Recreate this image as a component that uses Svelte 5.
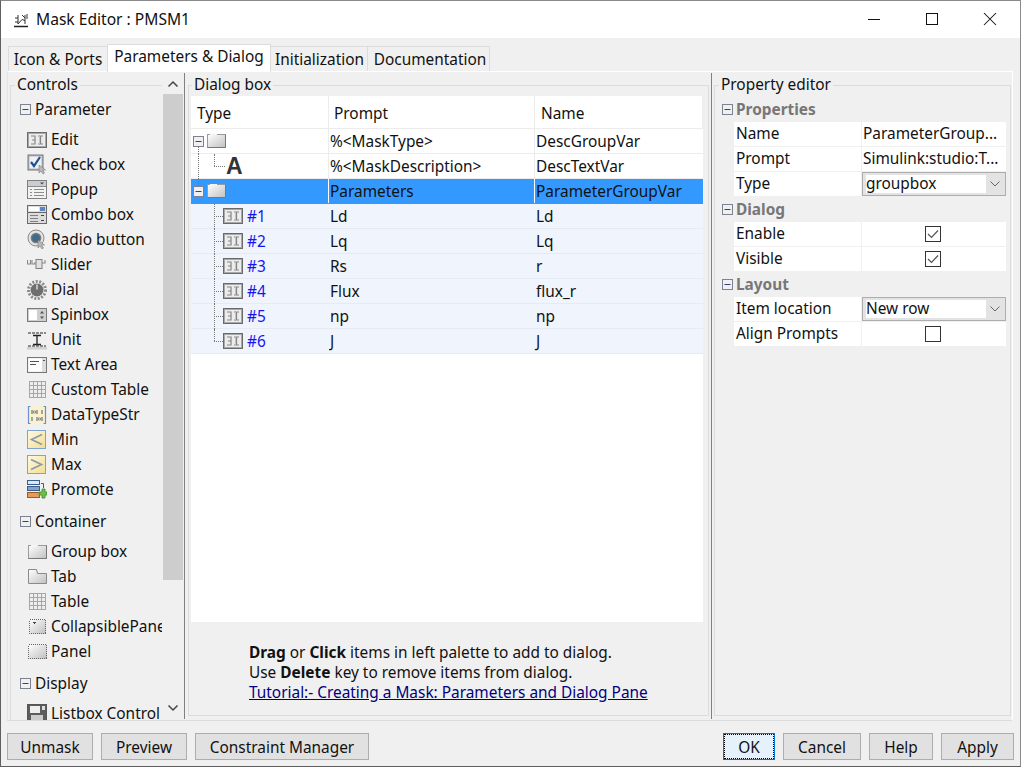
<script>
  const groups = [
    { title: 'Parameter', items: [
      ['edit','Edit'],['check','Check box'],['popup','Popup'],['combo','Combo box'],['radio','Radio button'],
      ['slider','Slider'],['dial','Dial'],['spin','Spinbox'],['unit','Unit'],['area','Text Area'],
      ['grid','Custom Table'],['dts','DataTypeStr'],['min','Min'],['max','Max'],['promote','Promote']] },
    { title: 'Container', items: [
      ['group','Group box'],['tab','Tab'],['grid','Table'],['coll','CollapsiblePanel'],['panel','Panel']] },
    { title: 'Display', items: [['list','Listbox Control']] }
  ];
  const params = [
    ['#1','Ld','Ld'],['#2','Lq','Lq'],['#3','Rs','r'],['#4','Flux','flux_r'],['#5','np','np'],['#6','J','J']
  ];
  const tabs = ['Icon & Ports','Parameters & Dialog','Initialization','Documentation'];
</script>

{#snippet minus()}
  <svg class="minus" width="11" height="11" viewBox="0 0 11 11"><rect x=".5" y=".5" width="10" height="10" fill="#f0f0f2" stroke="#7d8290"/><path d="M2.500 5.500h6" stroke="#34427a"/></svg>
{/snippet}

{#snippet chevron()}
  <svg width="12" height="8" viewBox="0 0 12 8"><path d="M1.500 1.500 6 6l4.500-4.500" fill="none" stroke="#666" stroke-width="1"/></svg>
{/snippet}

{#snippet checkbox(on)}
  <svg width="17" height="17" viewBox="0 0 17 17"><rect x=".5" y=".5" width="15" height="15" fill="#fff" stroke="#333"/>{#if on}<path d="M3 8l3.500 3.500L13 4.500" fill="none" stroke="#555" stroke-width="1.200"/>{/if}</svg>
{/snippet}

{#snippet editIcon()}
  <svg class="ic" width="20" height="16" viewBox="0 0 20 16"><rect x=".5" y=".5" width="19" height="15" fill="#a9a9a9" stroke="#6a6a6a"/><rect x="2" y="2" width="16" height="12" fill="#ececec"/><path d="M4 4h4v8H4M5 8h3M11 4h5M13.500 4v8M11 12h5" fill="none" stroke="#858585" stroke-width="1.200"/><path d="M12.500 4v8" stroke="#c4c4c4"/></svg>
{/snippet}

{#snippet groupIcon()}
  <svg class="ic" width="19" height="14" viewBox="0 0 19 14"><rect x=".5" y=".5" width="18" height="13" fill="url(#gb)" stroke="#9a9a9a"/><path d="M3 .5h7" stroke="#f4f4f4"/><path d="M.5 13.500h18V.5" fill="none" stroke="#777"/></svg>
{/snippet}

{#snippet icon(k)}
  <span class="icbox">
  {#if k === 'edit'}
    {@render editIcon()}
  {:else if k === 'check'}
    <svg width="20" height="21" viewBox="0 0 20 21"><rect x="1" y="1" width="15" height="15" fill="#b5b8bf" stroke="#777"/><rect x="2.500" y="2.500" width="12" height="12" fill="#eef0f5"/><path d="M4 8l3 4 6-9" fill="none" stroke="#1f4f8f" stroke-width="2.200"/><path d="M12 11l0 8 2-2 2 3 1.500-1-2-3h3z" fill="#b9b9b9" stroke="#7a7a7a" stroke-width=".6"/></svg>
  {:else if k === 'popup'}
    <svg width="20" height="20" viewBox="0 0 20 20"><rect x=".5" y=".5" width="19" height="18" fill="#f2f2f2" stroke="#808080"/><rect x="1" y="1" width="18" height="5" fill="#c9ccd4"/><path d="M13 2.500h4l-2 2z" fill="#444"/><path d="M1 6.500h18M3 9.500h2M7 9.500h10M3 12.500h2M7 12.500h10M3 15.500h2M7 15.500h10" stroke="#8c8c8c"/></svg>
  {:else if k === 'combo'}
    <svg width="20" height="20" viewBox="0 0 20 20"><rect x=".5" y=".5" width="19" height="18" fill="#dcdcdc" stroke="#6a6a6a"/><rect x="2" y="2" width="10" height="4" fill="#fff"/><rect x="13" y="2" width="5" height="4" fill="#5b86c4"/><path d="M1 7.500h18" stroke="#666"/><path d="M3 10.500h8M3 13.500h8M3 16.500h8" stroke="#808080"/><path d="M14 10.500h3M14 15.500h3" stroke="#444"/></svg>
  {:else if k === 'radio'}
    <svg width="20" height="21" viewBox="0 0 20 21"><circle cx="9" cy="9" r="8" fill="#e4e4e4" stroke="#8a8a8a"/><circle cx="9" cy="9" r="4.600" fill="#3e6a8c" stroke="#7b7b7b" stroke-width="1.500"/><path d="M11 11v8l2-2 2 3 1.500-1-2-3h3z" fill="#b9b9b9" stroke="#7a7a7a" stroke-width=".6"/></svg>
  {:else if k === 'slider'}
    <svg width="20" height="12" viewBox="0 0 20 12"><path d="M.5 1v4h3V1M5 1v4h3V3" fill="none" stroke="#888" stroke-width="1.100"/><rect x="9" y=".5" width="6" height="9" fill="#e2e2e2" stroke="#808080"/><path d="M15 4h3V1" fill="none" stroke="#888" stroke-width="1.100"/></svg>
  {:else if k === 'dial'}
    <svg width="20" height="20" viewBox="0 0 20 20"><circle cx="10" cy="10" r="8.500" fill="none" stroke="#8a8a8a" stroke-width="3" stroke-dasharray="2 1.500"/><circle cx="10" cy="10" r="6.500" fill="#6e6e6e"/><path d="M10 4.500v5" stroke="#e8e8e8" stroke-width="1.300"/></svg>
  {:else if k === 'spin'}
    <svg width="20" height="14" viewBox="0 0 20 14"><rect x=".5" y=".5" width="19" height="13" fill="#cfcfcf" stroke="#7a7a7a"/><rect x="2" y="2" width="8" height="10" fill="#fff"/><path d="M13 5.500h4l-2-2.500zM13 8.500h4l-2 2.500z" fill="#555"/></svg>
  {:else if k === 'unit'}
    <svg width="20" height="20" viewBox="0 0 20 20"><path d="M1 3h18M1 16h18" stroke="#8a8a8a" stroke-width="2" stroke-dasharray="3 1"/><path d="M6 5.500h8M10 5.500v9M6 14.500h8" fill="none" stroke="#222" stroke-width="1.300"/><rect y="17" width="20" height="2.500" fill="#d0d0d0"/></svg>
  {:else if k === 'area'}
    <svg width="20" height="16" viewBox="0 0 20 16"><rect x=".5" y=".5" width="19" height="15" fill="#fff" stroke="#777" stroke-width="1.200"/><path d="M3 4.500h9M3 7.500h6" stroke="#555"/><rect x="15" y="1" width="4" height="14" fill="#ddd"/><path d="M16 3.500h2" stroke="#555"/></svg>
  {:else if k === 'grid'}
    <svg width="17" height="17" viewBox="0 0 17 17"><rect x=".5" y=".5" width="16" height="16" fill="#eee" stroke="#a6a6a6"/><path d="M.5 4.500h16M.5 8.500h16M.5 12.500h16M4.500.5v16M8.500.5v16M12.500.5v16" stroke="#a6a6a6"/></svg>
  {:else if k === 'dts'}
    <svg width="20" height="20" viewBox="0 0 20 20"><rect x="1" y="1" width="18" height="18" fill="#f8f2d0"/><path d="M3.500 1.500H1.500v17h2M16.500 1.500h2v17h-2" fill="none" stroke="#6b92c4" stroke-width="1.200"/><path d="M5 5v4M10 5v4M15 5v4M5 12v4M10 12v4M15 12v4" stroke="#7c7c7c" stroke-width="1.300"/><path d="M6.500 6h2v2h-2zM11.500 13h2v2h-2z" fill="none" stroke="#7c7c7c" stroke-width=".8"/></svg>
  {:else if k === 'min'}
    <svg width="20" height="20" viewBox="0 0 20 20"><rect x=".5" y=".5" width="18" height="18" fill="url(#yl)" stroke="#7ea4cf"/><path d="M15 4.500 4.500 9.500 15 14.500" fill="none" stroke="#8c98a6" stroke-width="1.600"/></svg>
  {:else if k === 'max'}
    <svg width="20" height="20" viewBox="0 0 20 20"><rect x=".5" y=".5" width="18" height="18" fill="url(#yl)" stroke="#7ea4cf"/><path d="M4 4.500 14.500 9.500 4 14.500" fill="none" stroke="#8c98a6" stroke-width="1.600"/></svg>
  {:else if k === 'promote'}
    <svg width="20" height="20" viewBox="0 0 20 20"><rect x=".5" y=".5" width="12" height="4" fill="#dbe6f4" stroke="#3a5d8c"/><rect x=".5" y="6.500" width="12" height="4" fill="#7fa3d0" stroke="#3a5d8c"/><rect x=".5" y="12.500" width="12" height="5" fill="#e89a5a" stroke="#9a5a2a"/><path d="M14 3.500h2.500V8" fill="none" stroke="#555"/><path d="M15 9h3v3h2v3h-2v3h-3v-3h-3v-3h3z" fill="#6fbf4f" stroke="#3d8a2a" stroke-width=".8"/></svg>
  {:else if k === 'group'}
    {@render groupIcon()}
  {:else if k === 'tab'}
    <svg width="19" height="15" viewBox="0 0 19 15"><path d="M.5 14.500V.5h8l1 4h9v10z" fill="url(#gb)" stroke="#8a8a8a"/></svg>
  {:else if k === 'coll'}
    <svg width="17" height="15" viewBox="0 0 17 15" shape-rendering="crispEdges"><rect x=".5" y=".5" width="16" height="14" fill="url(#gb)" stroke="#666" stroke-dasharray="1 1"/><path d="M4 3h3v1H6v1H5V4H4z" fill="#444"/></svg>
  {:else if k === 'panel'}
    <svg width="19" height="15" viewBox="0 0 19 15" shape-rendering="crispEdges"><rect x=".5" y=".5" width="18" height="14" fill="url(#gb)" stroke="#666" stroke-dasharray="1 1"/></svg>
  {:else if k === 'list'}
    <svg width="20" height="20" viewBox="0 0 20 20"><rect x=".5" y=".5" width="19" height="19" fill="#5c5c5c" stroke="#555"/><rect x="3" y="2" width="10" height="7" fill="#eee"/><rect x="15" y="2" width="3" height="4" fill="#ddd"/><rect x="4" y="11" width="12" height="8" fill="#ccc"/></svg>
  {/if}
  </span>
{/snippet}

<svg class="defs" width="0" height="0" aria-hidden="true">
  <defs>
    <linearGradient id="gb" x1="0" y1="0" x2="1" y2="1"><stop offset="0" stop-color="#ffffff"/><stop offset="1" stop-color="#c0c0c0"/></linearGradient>
    <linearGradient id="yl" x1="0" y1="0" x2="1" y2="1"><stop offset="0" stop-color="#fdfbe6"/><stop offset="1" stop-color="#f3dc8c"/></linearGradient>
  </defs>
</svg>

<div class="window">
  <header class="title">
    <svg class="appicon" width="16" height="16" viewBox="0 0 16 16"><rect x=".5" y=".5" width="15" height="15" fill="#fff"/><path d="M1 14.500h14" stroke="#222" stroke-width="1.500"/><path d="M2 6h3M2 10h3M5 3v9l4-4.500 3 1M12 3v9M9 3l3 3M14 2v5" fill="none" stroke="#333"/></svg>
    <span class="title-text">Mask Editor : PMSM1</span>
    <div class="winctl">
      <svg width="14" height="14" viewBox="0 0 14 14"><path d="M1 7.500h12" stroke="#111"/></svg>
      <svg width="14" height="14" viewBox="0 0 14 14"><rect x="1.500" y="1.500" width="11" height="11" fill="none" stroke="#111"/></svg>
      <svg width="14" height="14" viewBox="0 0 14 14"><path d="M1 1l12 12M13 1 1 13" stroke="#111" stroke-width="1.050"/></svg>
    </div>
  </header>

  <nav class="tabs">
    {#each tabs as t, i}
      <div class="tab" class:sel={i === 1}>{t}</div>
    {/each}
  </nav>

  <section class="panel">
    <div class="left">
      <fieldset class="box leftbox">
        <legend>Controls</legend>
        <div class="palette">
          {#each groups as g}
            <div class="ghead">{@render minus()}<span>{g.title}</span></div>
            <div class="gitems">
              {#each g.items as it}
                <div class="pitem">{@render icon(it[0])}<span>{it[1]}</span></div>
              {/each}
            </div>
          {/each}
        </div>
      </fieldset>
      <div class="scroll">
        <div class="sbtn"><svg width="12" height="8" viewBox="0 0 12 8"><path d="M1.500 6.500 6 2l4.500 4.500" fill="none" stroke="#444" stroke-width="1.500"/></svg></div>
        <div class="thumb"></div>
        <div class="track"></div>
        <div class="sbtn"><svg width="12" height="8" viewBox="0 0 12 8"><path d="M1.500 1.500 6 6l4.500-4.500" fill="none" stroke="#444" stroke-width="1.500"/></svg></div>
      </div>
    </div>

    <div class="split"></div>

    <div class="center">
      <fieldset class="box centerbox">
        <legend>Dialog box</legend>
        <div class="table">
          <div class="thead">
            <div class="c1"><span class="th1">Type</span></div>
            <div class="c2"><span class="th2">Prompt</span></div>
            <div class="c3"><span class="th3">Name</span></div>
          </div>
          <div class="row">
            <div class="c1 tree"><i class="v v-a"></i>{@render minus()}{@render groupIcon()}</div>
            <div class="c2">%&lt;MaskType&gt;</div><div class="c3">DescGroupVar</div>
          </div>
          <div class="row">
            <div class="c1 tree"><i class="v v-full"></i><i class="v v-b"></i><i class="h h-b"></i><b class="bigA">A</b></div>
            <div class="c2">%&lt;MaskDescription&gt;</div><div class="c3">DescTextVar</div>
          </div>
          <div class="row selrow">
            <div class="c1 tree"><i class="v v-c"></i>{@render minus()}{@render groupIcon()}</div>
            <div class="c2">Parameters</div><div class="c3">ParameterGroupVar</div>
          </div>
          {#each params as p, i}
            <div class="row prow">
              <div class="c1 tree child">
                <i class="v v-d" class:last={i === params.length - 1}></i><i class="h h-d"></i>
                {@render editIcon()}<span class="num">{p[0]}</span>
              </div>
              <div class="c2">{p[1]}</div><div class="c3">{p[2]}</div>
            </div>
          {/each}
        </div>
        <div class="hint">
          <p><b>Drag</b> or <b>Click</b> items in left palette to add to dialog.</p>
          <p>Use <b>Delete</b> key to remove items from dialog.</p>
          <p class="link">Tutorial:- Creating a Mask: Parameters and Dialog Pane</p>
        </div>
      </fieldset>
    </div>

    <div class="split"></div>

    <div class="right">
      <fieldset class="box rightbox">
        <legend>Property editor</legend>
        <div class="phead">{@render minus()}<b>Properties</b></div>
        <div class="prop"><div class="pk">Name</div><div class="pv">ParameterGroup...</div></div>
        <div class="prop"><div class="pk">Prompt</div><div class="pv">Simulink:studio:T...</div></div>
        <div class="prop"><div class="pk">Type</div><div class="pv cb"><span class="cbf">groupbox</span><span class="cba">{@render chevron()}</span></div></div>
        <div class="phead">{@render minus()}<b>Dialog</b></div>
        <div class="prop"><div class="pk">Enable</div><div class="pv mid">{@render checkbox(true)}</div></div>
        <div class="prop"><div class="pk">Visible</div><div class="pv mid">{@render checkbox(true)}</div></div>
        <div class="phead">{@render minus()}<b>Layout</b></div>
        <div class="prop"><div class="pk">Item location</div><div class="pv cb"><span class="cbf">New row</span><span class="cba">{@render chevron()}</span></div></div>
        <div class="prop"><div class="pk">Align Prompts</div><div class="pv mid">{@render checkbox(false)}</div></div>
      </fieldset>
    </div>
  </section>

  <footer class="buttons">
    <button class="b-unmask">Unmask</button>
    <button class="b-preview">Preview</button>
    <button class="b-constraint">Constraint Manager</button>
    <span class="spacer"></span>
    <button class="b-ok">OK</button>
    <button class="b-cancel">Cancel</button>
    <button class="b-help">Help</button>
    <button class="b-apply">Apply</button>
  </footer>
</div>

<style>
  :global(body) { margin: 0; background: #fff; }
  .defs { position: absolute; }
  .window {
    width: 1021px; height: 767px; box-sizing: border-box;
    border: 1px solid #5f5f5f; border-right-color: #8a8a8a; border-top-color: #8a8a8a;
    background: #f0f0f0; color: #111; overflow: hidden;
    display: flex; flex-direction: column;
    font-family: "Noto Sans", sans-serif; font-size: 15.4px; line-height: 24px;
  }
  .title { height: 37px; background: #fff; display: flex; align-items: center; padding-left: 12px; flex: none; }
  .appicon { margin-right: 7px; }
  .title-text { font-size: 15.6px; margin-bottom: 1px; }
  .winctl { margin-left: auto; display: flex; gap: 44px; padding-right: 23px; margin-bottom: 2px; }

  .tabs { display: flex; align-items: flex-end; height: 33px; padding-left: 7px; flex: none; box-sizing: border-box; }
  .tab {
    height: 25px; box-sizing: border-box; border: 1px solid #dcdcdc; border-bottom: none; margin-right: -1px;
    padding: 0; text-align: center; white-space: nowrap; line-height: 25px; background: #f0f0f0; position: relative;
  }
  .tab:nth-child(1) { width: 100px; }
  .tab:nth-child(2) { width: 164px; }
  .tab:nth-child(3) { width: 98px; padding-left: 1px; }
  .tab:nth-child(4) { width: 123px; padding-left: 3px; }
  .tab.sel { height: 28px; background: #fff; line-height: 24px; border-color: #dcdcdc; z-index: 1; margin-bottom: -1px; }

  .panel {
    margin-left: 6px; width: 1006px; height: 650px; box-sizing: border-box; flex: none;
    border: 1px solid #fff; border-left-color: #e4e4e4; border-bottom-color: #dcdcdc;
    display: flex; overflow: hidden;
  }
  .split { width: 1px; background: #808080; margin: 1px 0 1px; flex: none; }
  .left { width: 176px; flex: none; display: flex; padding: 1px 2px 0 2px; box-sizing: border-box; }
  .center { width: 526px; flex: none; padding: 1px 2px 4px 3px; box-sizing: border-box; display: flex; }
  .right { flex: 1; padding: 1px 1px 4px 2px; box-sizing: border-box; display: flex; }

  .box { margin: 0; min-width: 0; border: 1px solid #dcdcdc; padding: 0; box-sizing: border-box; flex: 1; }
  legend { margin-left: 4px; padding: 0 2px; line-height: 24px; }
  .leftbox { border-bottom: none; border-right: none; overflow: hidden; width: 152px; flex: none; }
  .palette { overflow: hidden; height: 630px; white-space: nowrap; }
  .ghead { height: 25px; display: flex; align-items: center; gap: 4px; padding-left: 9px; }
  .gitems { padding: 5px 0 7px 16px; }
  .pitem { height: 25px; display: flex; align-items: center; gap: 4px; }
  .icbox { width: 20px; flex: none; display: flex; justify-content: center; align-items: center; height: 25px; }
  .icbox svg { display: block; }

  .scroll { width: 20px; margin-left: 1px; display: flex; flex-direction: column; flex: none; padding-bottom: 2px; }
  .sbtn { height: 21px; display: flex; align-items: center; justify-content: center; flex: none; }
  .thumb { height: 486px; background: #cdcdcd; flex: none; }
  .track { flex: 1; }

  .centerbox { display: flex; flex-direction: column; padding: 0 5px 0 2px; }
  .centerbox legend { margin-left: 1px; margin-bottom: -1px; }
  .table { height: 526px; background: #fff; flex: none; overflow: hidden; }
  .thead { display: flex; height: 33px; border-bottom: 1px solid #ececec; box-sizing: border-box; }
  .thead > div { border-right: 1px solid #ececec; line-height: 35px; }
  .th1 { padding-left: 6px; } .th2 { padding-left: 5px; } .th3 { padding-left: 6px; }
  .row { display: flex; height: 25px; box-sizing: border-box; border-bottom: 1px solid #ececec; line-height: 25px; }
  .c1 { width: 138px; flex: none; box-sizing: border-box; border-right: 1px solid #ececec; }
  .c2 { width: 206px; flex: none; box-sizing: border-box; border-right: 1px solid #ececec; padding-left: 1px; }
  .c3 { flex: 1; padding-left: 1px; }
  .thead .c2, .thead .c3 { padding-left: 0; }
  .selrow { background: #3399ff; border-bottom-color: #3399ff; }
  .selrow .c1, .selrow .c2 { border-right-color: #fff; }
  .prow { background: #f0f4fd; border-bottom-color: #e6eaf3; }
  .prow .c1, .prow .c2 { border-right-color: #f0f4fd; }
  .tree { position: relative; display: flex; align-items: center; padding-left: 2px; gap: 3px; }
  .tree.child { padding-left: 32px; gap: 4px; }
  .minus { flex: none; display: block; }
  .ic { flex: none; display: block; }
  .num { color: #1515f0; }
  .v { position: absolute; border-left: 1px dotted #777; width: 0; }
  .h { position: absolute; border-top: 1px dotted #777; height: 0; }
  .v-a { left: 7px; top: 17px; height: 8px; }
  .v-full { left: 7px; top: 0; height: 25px; }
  .v-c { left: 7px; top: 0; height: 7px; }
  .v-b { left: 23px; top: 0; height: 12px; }
  .h-b { left: 23px; top: 12px; width: 11px; }
  .v-d { left: 23px; top: 0; height: 25px; }
  .v-d.last { height: 12px; }
  .h-d { left: 23px; top: 12px; width: 9px; }
  .bigA { margin-left: 33px; font-family: "Liberation Sans", sans-serif; font-size: 23px; color: #333; line-height: 24px; }

  .hint { padding: 21px 0 0 58px; line-height: 20px; }
  .hint p { margin: 0; }
  .hint .link { color: #000080; text-decoration: underline; }

  .rightbox { padding: 0 4px 0 7px; }
  .rightbox legend { margin-left: -3px; }
  .phead { height: 25px; display: flex; align-items: center; gap: 3px; color: #777; }
  .phead b { font-weight: 700; }
  .prop { height: 25px; display: flex; margin-left: 12px; box-sizing: border-box; border-bottom: 1px solid #f0f0f0; background: #fff; line-height: 24px; }
  .pk { width: 128px; flex: none; box-sizing: border-box; padding-left: 2px; border-right: 1px solid #f0f0f0; }
  .pv { flex: 1; padding-left: 1px; white-space: nowrap; overflow: hidden; }
  .mid { display: flex; align-items: center; justify-content: center; padding: 0 2px 0 0; }
  .cb { display: flex; padding: 2px 1px 2px 3px; background: #e3e3e3; border: 1px solid #adadad; box-sizing: border-box; height: 24px; line-height: 18px; }
  .cbf { width: 120px; background: #fff; }
  .cba { flex: 1; display: flex; align-items: center; justify-content: center; }

  .buttons { display: flex; align-items: flex-start; padding: 12px 6px 0 6px; gap: 8px; flex: none; }
  .spacer { flex: 1; }
  button {
    font: inherit; color: #111; height: 27px; padding: 2px 0 0; margin: 0; box-sizing: border-box;
    background: #e1e1e1; border: 1px solid #adadad; line-height: 24px;
  }
  .b-unmask { width: 86px; } .b-preview { width: 86px; } .b-constraint { width: 174px; }
  .b-ok { width: 52px; background: #e5f1fb; border: 1px solid #0078d7; outline: 1px dotted #000; outline-offset: -2px; }
  .b-cancel { width: 78px; } .b-help { width: 64px; } .b-apply { width: 73px; }
</style>
